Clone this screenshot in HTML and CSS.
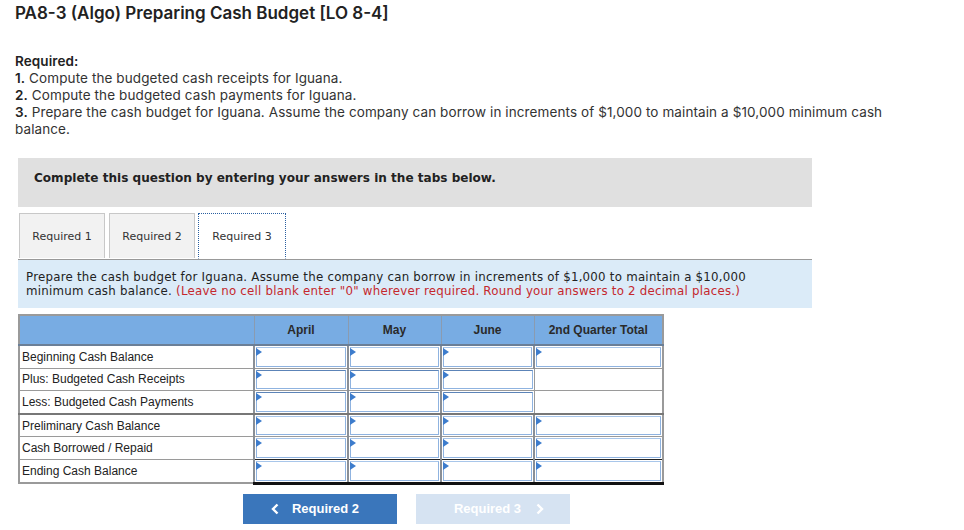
FILE: index.html
```html
<!DOCTYPE html>
<html>
<head>
<meta charset="utf-8">
<link rel="stylesheet" href="styles.css">
</head>
<body>
<div class="page">
  <h1 class="title">PA8-3 (Algo) Preparing Cash Budget [LO 8-4]</h1>
  <div class="req">
    <div class="req-head">Required:</div>
    <div><b>1.</b> Compute the budgeted cash receipts for Iguana.</div>
    <div><b>2.</b> Compute the budgeted cash payments for Iguana.</div>
    <div><b>3.</b> Prepare the cash budget for Iguana. Assume the company can borrow in increments of $1,000 to maintain a $10,000 minimum cash balance.</div>
  </div>

  <div class="panel">
    <div class="instr">Complete this question by entering your answers in the tabs below.</div>
    <div class="tabs">
      <div class="tab">Required 1</div>
      <div class="tab">Required 2</div>
      <div class="tab active">Required 3</div>
    </div>
    <div class="note">Prepare the cash budget for Iguana. Assume the company can borrow in increments of $1,000 to maintain a $10,000 minimum cash balance. <span class="red">(Leave no cell blank enter "0" wherever required. Round your answers to 2 decimal places.)</span></div>

    <table class="budget">
      <colgroup>
        <col class="c-label"><col class="c-a"><col class="c-m"><col class="c-m"><col class="c-t">
      </colgroup>
      <thead>
        <tr><th></th><th>April</th><th>May</th><th>June</th><th>2nd Quarter Total</th></tr>
      </thead>
      <tbody>
        <tr class="r1"><td class="lbl">Beginning Cash Balance</td><td class="in"><div class="box"></div></td><td class="in"><div class="box"></div></td><td class="in"><div class="box"></div></td><td class="in"><div class="box"></div></td></tr>
        <tr class="r2"><td class="lbl">Plus: Budgeted Cash Receipts</td><td class="in"><div class="box"></div></td><td class="in"><div class="box"></div></td><td class="in"><div class="box"></div></td><td class="plain"></td></tr>
        <tr class="r3"><td class="lbl">Less: Budgeted Cash Payments</td><td class="in"><div class="box"></div></td><td class="in"><div class="box"></div></td><td class="in"><div class="box"></div></td><td class="plain"></td></tr>
        <tr class="r4"><td class="lbl">Preliminary Cash Balance</td><td class="in"><div class="box"></div></td><td class="in"><div class="box"></div></td><td class="in"><div class="box"></div></td><td class="in"><div class="box"></div></td></tr>
        <tr class="r5"><td class="lbl">Cash Borrowed / Repaid</td><td class="in"><div class="box"></div></td><td class="in"><div class="box"></div></td><td class="in"><div class="box"></div></td><td class="in"><div class="box"></div></td></tr>
        <tr class="r6"><td class="lbl">Ending Cash Balance</td><td class="in"><div class="box"></div></td><td class="in"><div class="box"></div></td><td class="in"><div class="box"></div></td><td class="in"><div class="box"></div></td></tr>
      </tbody>
    </table>

    <div class="nav">
      <div class="btn prev"><svg class="chev" width="8" height="12" viewBox="0 0 8 12"><path d="M6.5 1.5 L2 6 L6.5 10.5" fill="none" stroke="#fff" stroke-width="2.4"/></svg><span>Required 2</span></div>
      <div class="btn next"><span>Required 3</span><svg class="chev" width="8" height="12" viewBox="0 0 8 12"><path d="M1.5 1.5 L6 6 L1.5 10.5" fill="none" stroke="#fff" stroke-width="2.4"/></svg></div>
    </div>
  </div>
</div>
</body>
</html>
```
FILE: styles.css
```css
html, body { margin: 0; padding: 0; background: #fff; }
.page { padding: 0 0 0 15px; }
.title {
  margin: 0; padding-top: 3px;
  font-family: Inter, "Open Sans", sans-serif; font-weight: 600;
  font-size: 17px; line-height: 20px; color: #222;
}
.req {
  margin-top: 30px;
  font-family: Inter, "Open Sans", sans-serif; font-size: 13.5px; letter-spacing: 0.1px; line-height: 17px; color: #333;
  width: 900px;
}
.req b { font-weight: 600; color: #222; }
.req-head { font-weight: 600; color: #222; }

.panel { margin-top: 20px; margin-left: 3px; width: 794px; }
.instr {
  background: #e0e0e0; height: 49px; box-sizing: border-box;
  padding: 13px 0 0 16px;
  font-family: "DejaVu Sans", Verdana, sans-serif; font-weight: 700; font-size: 12.05px; color: #222;
}
.tabs { display: flex; margin-top: 6px; padding-left: 1px; border-bottom: 1px solid #999; height: 46px; }
.tab {
  width: 86px; height: 45px; box-sizing: border-box; margin-right: 4px;
  background: #f2f2f2; border: 1px solid #c8c8c8; border-bottom: none;
  display: flex; align-items: center; justify-content: center;
  font-family: "DejaVu Sans", Verdana, sans-serif; font-size: 11px; color: #333;
}
.tab:nth-child(2) { margin-right: 3px; }
.tab.active { background: #fff; width: 88px; height: 46px; border: 1px dotted #2a5fa0; border-bottom: 1px solid #fff; margin-bottom: -1px; }
.note {
  background: #dbebf8; height: 48px; box-sizing: border-box; padding: 10px 40px 0 8px;
  font-family: "DejaVu Sans", Verdana, sans-serif; font-size: 11.8px; letter-spacing: 0.24px; line-height: 14px; color: #222;
}
.red { color: #c5282d; }

.budget {
  margin-top: 6px; border-collapse: collapse; table-layout: fixed; width: 644px;
  font-family: "Liberation Sans", Arial, sans-serif; font-size: 12px; color: #222;
  border: 2px solid #9a9a9a;
}
.c-label { width: 235px; } .c-a { width: 94px; } .c-m { width: 93px; } .c-t { width: 129px; }
.budget th {
  background: #78ace3; height: 28px; font-weight: 700; font-size: 12px; color: #2a2a2a;
  border: 1px solid #8a9bb0; border-bottom: 2px solid #6b7f97; padding: 0;
}
.budget td { padding: 0; border: 1px solid #9a9a9a; }
.budget td.lbl { padding-left: 2px; background: #fff; }
.budget tr.r3 td { border-bottom: 2px solid #777; }
.budget tr.r5 td.in { border-bottom: 1px solid #222; }
.budget tr.r6 td.in { border-bottom: 3px solid #111; }
.budget td.in { padding: 1px; background: #fff; border-left: 2px solid #8a8f96; }
.box {
  position: relative; height: 17.6px; background: #fff;
  border: 1px solid #8fb3e0; border-top-color: #a8c6ea;
}
.box::before {
  content: ""; position: absolute; left: -1px; top: 0;
  border-left: 6px solid #3d7ccc; border-top: 4px solid transparent; border-bottom: 4px solid transparent;
}
.r2 .box, .r3 .box { border-top: 1px solid #5c84b8; }
.nav { display: flex; gap: 19px; margin-top: 9px; margin-left: 225px; }
.btn {
  width: 154px; height: 30px; display: flex; align-items: center; justify-content: center; gap: 13px;
  font-family: "Liberation Sans", Arial, sans-serif; font-weight: 700; font-size: 13px; color: #fff;
}
.btn.prev { background: #3a76bb; }
.btn.next { background: #d6e3f2; gap: 15px; padding-left: 12px; box-sizing: border-box; }
.btn.prev { padding-right: 10px; box-sizing: border-box; }
.chev { display: block; }
```
